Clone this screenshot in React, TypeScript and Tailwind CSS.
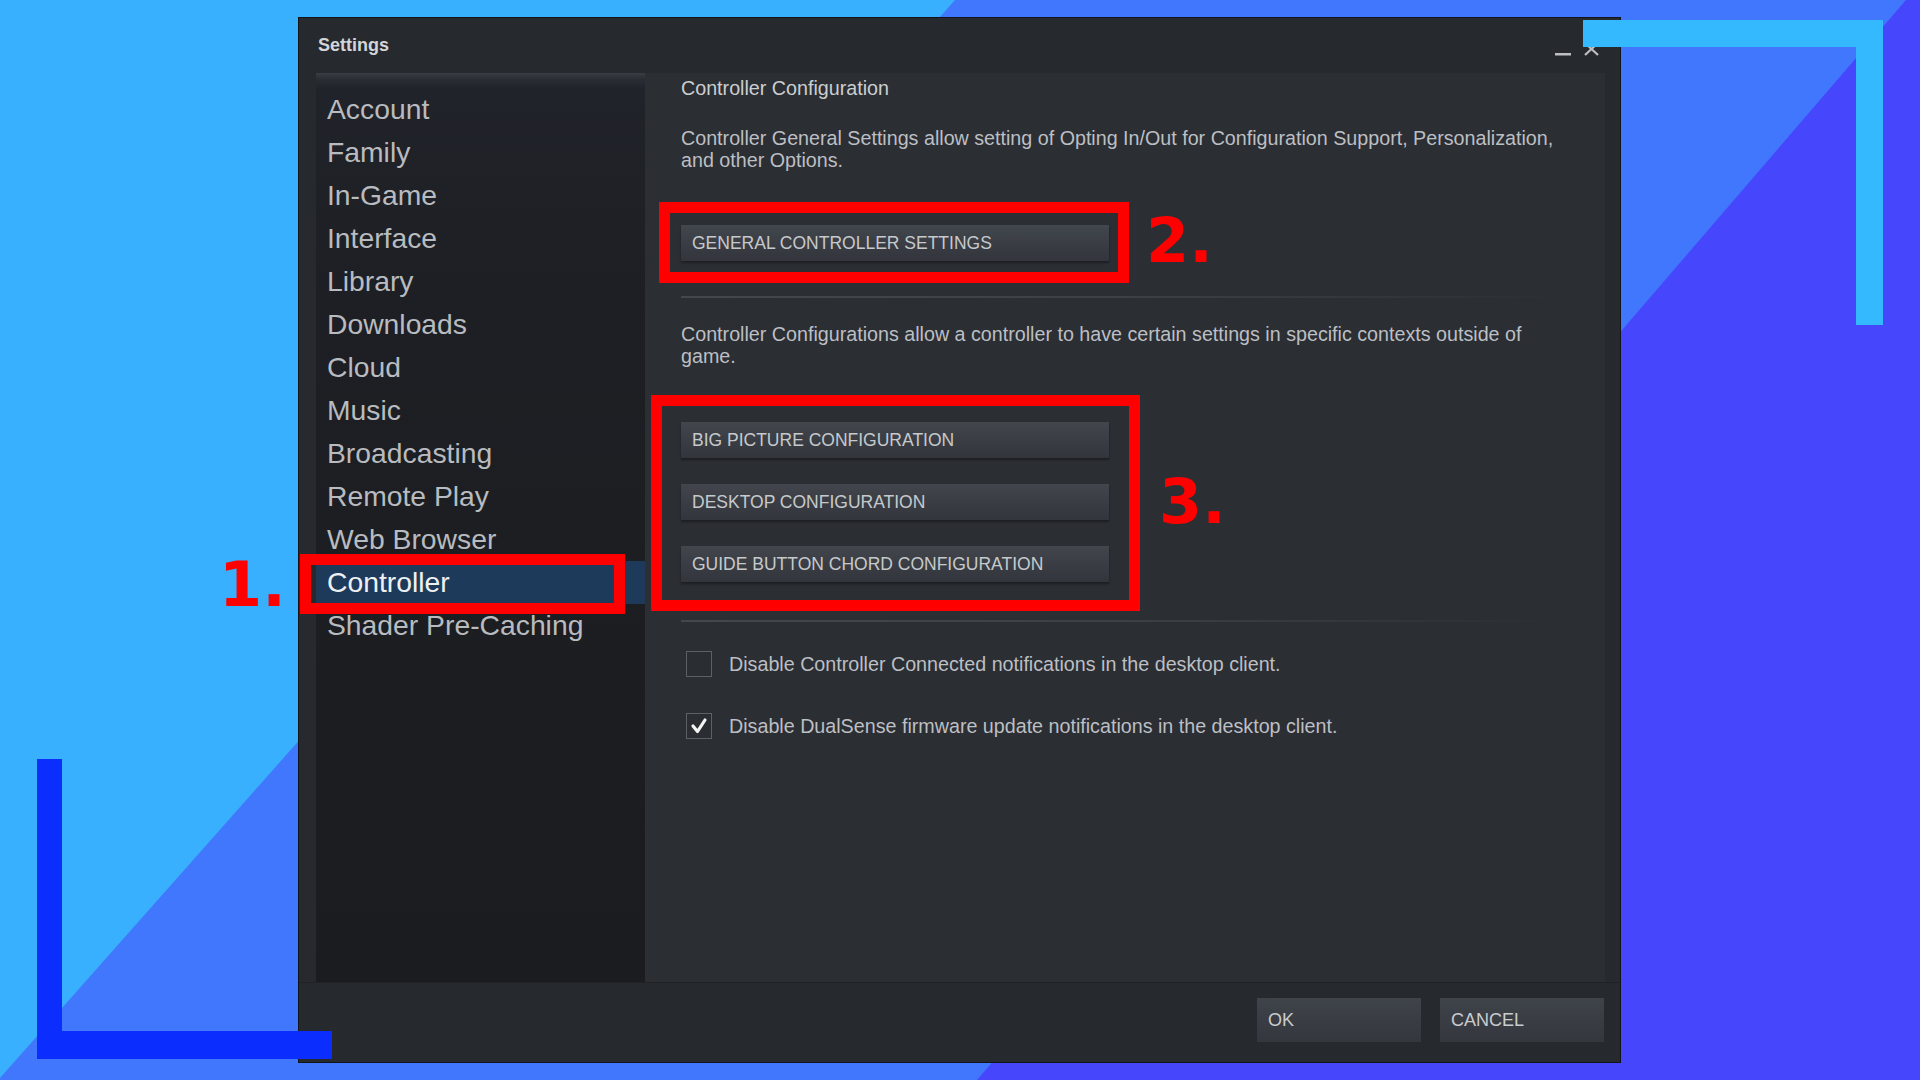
import React from "react";

const NAV_ITEMS = [
  "Account",
  "Family",
  "In-Game",
  "Interface",
  "Library",
  "Downloads",
  "Cloud",
  "Music",
  "Broadcasting",
  "Remote Play",
  "Web Browser",
  "Controller",
  "Shader Pre-Caching",
];

const labelFont = "font-['DejaVu_Sans',Verdana,sans-serif]";

function Marker({ text, className }: { text: string; className: string }) {
  return (
    <span
      className={`absolute text-[62px] leading-none font-bold text-[#ff0000] ${labelFont} ${className}`}
    >
      {text}
    </span>
  );
}

function SteamButton({ label }: { label: string }) {
  return (
    <div className="flex h-[36px] w-[428px] items-center bg-gradient-to-b from-[#42464d] to-[#32353b] pl-[11px] text-[17.5px] text-[#c6c9cc] shadow-[0_2px_2px_rgba(0,0,0,0.35)]">
      {label}
    </div>
  );
}

function Separator() {
  return (
    <div className="h-[2px] w-[884px] bg-gradient-to-r from-[#44474d] via-[#3d4046] to-transparent" />
  );
}

function Checkbox({ checked, label }: { checked: boolean; label: string }) {
  return (
    <div className="flex h-[26px] items-center">
      <div className="ml-[5px] flex h-[26px] w-[26px] items-center justify-center border border-[#5d6066] bg-[#2a2d32]">
        {checked && (
          <svg width="18" height="18" viewBox="0 0 18 18">
            <polyline
              points="3,9 7.5,14.5 15,3"
              fill="none"
              stroke="#f4f4f4"
              strokeWidth="3.2"
              strokeLinecap="round"
              strokeLinejoin="round"
            />
          </svg>
        )}
      </div>
      <span className="ml-[17px] text-[19.7px] text-[#bcbfc3]">{label}</span>
    </div>
  );
}

function Sidebar() {
  return (
    <div className="h-full w-[329px] bg-[linear-gradient(to_bottom,#3a3d44_0px,#2a2d33_6px,#202329_16px,#1d1f24_220px,#1a1c1f_100%)] pt-[15px]">
      {NAV_ITEMS.map((item) => {
        const active = item === "Controller";
        return (
          <div
            key={item}
            className={
              active
                ? "relative flex h-[43px] items-center bg-[#1d3a5b] pl-[11px] text-[28.3px] leading-none text-[#eef0f2]"
                : "relative flex h-[43px] items-center pl-[11px] text-[28.3px] leading-none text-[#b8bbbf]"
            }
          >
            {item}
            {active && (
              <>
                <div className="absolute bottom-[-10px] left-[-16px] right-[20px] top-[-7px] border-[11px] border-[#ff0000]" />
                <Marker text="1." className="left-[-97px] top-[-7px]" />
              </>
            )}
          </div>
        );
      })}
    </div>
  );
}

function Content() {
  return (
    <div className="flex h-full w-[960px] flex-col bg-[#2b2e33] pl-[36px] pt-[4px] text-[19.7px] leading-[22px]">
      <div className="text-[#cbced0]">Controller Configuration</div>
      <p className="mt-[28px] w-[884px] text-[#bcbfc3]">
        Controller General Settings allow setting of Opting In/Out for Configuration Support,
        Personalization, and other Options.
      </p>

      <div className="relative mt-[54px] w-[428px]">
        <SteamButton label="GENERAL CONTROLLER SETTINGS" />
        <div className="absolute bottom-[-22px] left-[-22px] right-[-20px] top-[-23px] border-[11px] border-[#ff0000]" />
        <Marker text="2." className="left-[465px] top-[-15px]" />
      </div>

      <div className="mt-[35px]">
        <Separator />
      </div>

      <p className="mt-[25px] w-[884px] text-[#bcbfc3]">
        Controller Configurations allow a controller to have certain settings in specific contexts
        outside of game.
      </p>

      <div className="relative mt-[55px] flex w-[428px] flex-col gap-[26px]">
        <SteamButton label="BIG PICTURE CONFIGURATION" />
        <SteamButton label="DESKTOP CONFIGURATION" />
        <SteamButton label="GUIDE BUTTON CHORD CONFIGURATION" />
        <div className="absolute bottom-[-29px] left-[-30px] right-[-31px] top-[-27px] border-[11px] border-[#ff0000]" />
        <Marker text="3." className="left-[478px] top-[49px]" />
      </div>

      <div className="mt-[38px]">
        <Separator />
      </div>

      <div className="mt-[29px] flex flex-col gap-[36px]">
        <Checkbox checked={false} label="Disable Controller Connected notifications in the desktop client." />
        <Checkbox checked={true} label="Disable DualSense firmware update notifications in the desktop client." />
      </div>
    </div>
  );
}

function SettingsWindow() {
  return (
    <div className="flex h-[1046px] w-[1323px] flex-col border border-[#121418] bg-[#26292e]">
      <div className="flex h-[55px] items-center justify-between pl-[19px] pr-[20px]">
        <span className="text-[18px] font-bold text-[#d3d5d7]">Settings</span>
        <div className="flex items-center gap-[12px] pt-[6px]">
          <svg width="16" height="14" viewBox="0 0 16 14">
            <rect x="0" y="11" width="16" height="2.5" fill="#bdbfc2" />
          </svg>
          <svg width="17" height="14" viewBox="0 0 17 14">
            <path d="M2 1 L15 13 M15 1 L2 13" stroke="#bdbfc2" strokeWidth="2.2" />
          </svg>
        </div>
      </div>

      <div className="flex h-[909px] pl-[17px] pr-[15px]">
        <Sidebar />
        <Content />
      </div>

      <div className="flex flex-1 items-start justify-end gap-[19px] border-t border-[#1f2125] pr-[16px] pt-[15px]">
        <div className="flex h-[44px] w-[164px] items-center bg-gradient-to-b from-[#3f434a] to-[#34373d] pl-[11px] text-[18px] text-[#c9cccf]">
          OK
        </div>
        <div className="flex h-[44px] w-[164px] items-center bg-gradient-to-b from-[#3f434a] to-[#34373d] pl-[11px] text-[18px] text-[#c9cccf]">
          CANCEL
        </div>
      </div>
    </div>
  );
}

export default function App() {
  return (
    <div className="relative h-[1080px] w-[1920px] overflow-hidden font-['Liberation_Sans',Arial,sans-serif]">
      <svg
        className="absolute inset-0"
        width="1920"
        height="1080"
        viewBox="0 0 1920 1080"
      >
        <rect width="1920" height="1080" fill="#4646fd" />
        <polygon points="0,0 1906,0 977,1080 0,1080" fill="#4077fd" />
        <polygon points="0,0 955,0 0,1078" fill="#38b0fd" />
      </svg>

      <div className="relative flex pl-[298px] pt-[17px]">
        <SettingsWindow />
      </div>

      {/* decorative corner brackets */}
      <div className="absolute left-[1583px] top-[20px] h-[305px] w-[300px] border-r-[27px] border-t-[27px] border-[#34b9fe]" />
      <div className="absolute left-[37px] top-[759px] h-[300px] w-[295px] border-b-[28px] border-l-[25px] border-[#0b2dfe]" />
    </div>
  );
}
